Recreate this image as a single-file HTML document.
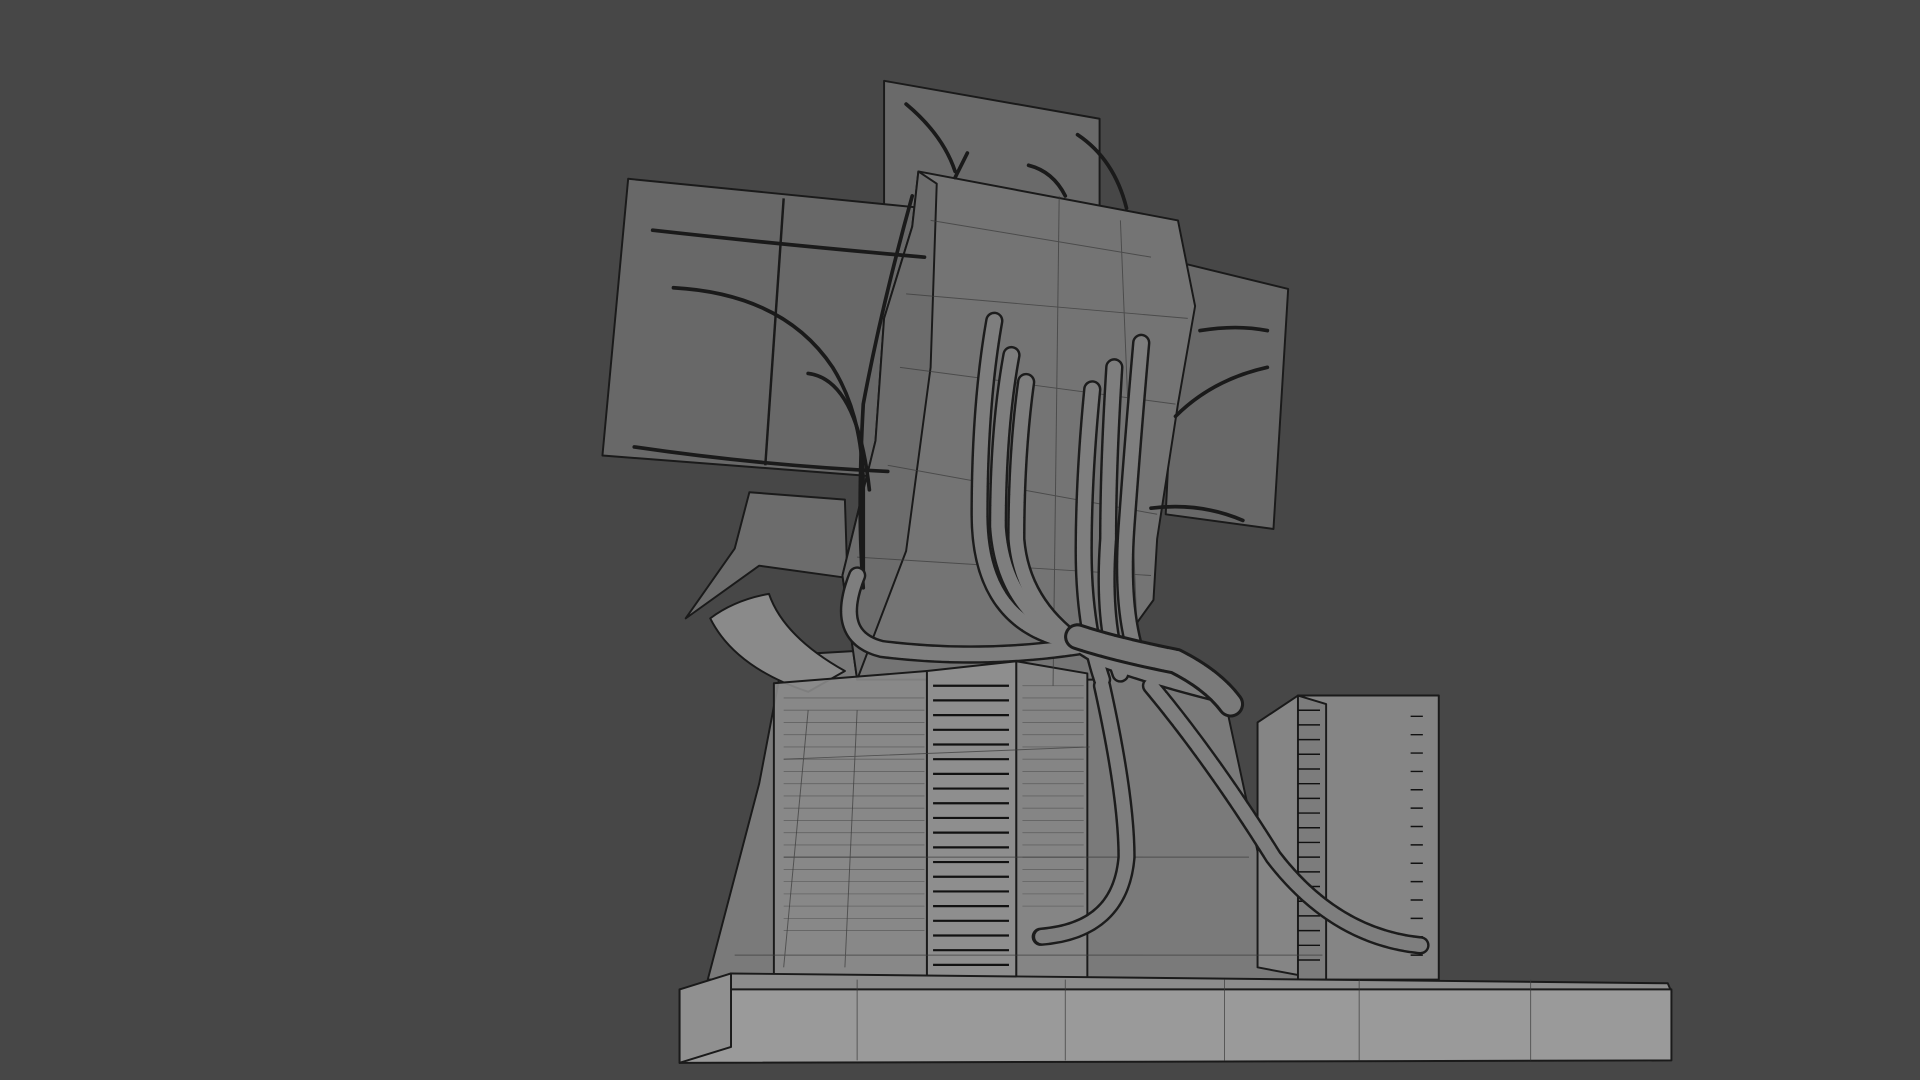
<!DOCTYPE html><html><head><style>html,body{margin:0;padding:0;background:#474747;overflow:hidden}svg{display:block}</style></head><body>
<svg width="1920" height="1080" viewBox="0 0 1568 882" preserveAspectRatio="none" xmlns="http://www.w3.org/2000/svg">
<rect width="1568" height="882" fill="#474747"/>
<g stroke="#1a1a1a" stroke-width="1.6" stroke-linejoin="round">
<polygon points="722,66 898,97 898,205 722,175" fill="#6a6a6a"/>
<polygon points="513,146 755,170 752,392 492,372" fill="#686868"/>
<line x1="640" y1="162" x2="625" y2="380" stroke-width="2"/>
<polygon points="962,214 1052,236 1040,432 952,420" fill="#686868"/>
<polygon points="612,402 690,408 692,472 620,462 560,505 600,448" fill="#6c6c6c"/>
<polygon points="640,535 900,520 1000,570 1028,700 1085,800 578,800 620,640" fill="#7a7a7a"/>
<polygon points="750,140 962,180 976,250 962,330 945,440 942,490 895,555 700,555 688,470 715,360 722,260 745,185" fill="#747474"/>
<polygon points="750,140 765,150 760,300 740,450 700,555 688,470 715,360 722,260 745,185" fill="#6c6c6c"/>
<path d="M580,505 Q600,490 628,485 Q640,520 690,548 L660,565 Q600,545 580,505Z" fill="#8a8a8a"/>
<polygon points="632,558 757,548 757,800 632,797" fill="#8a8a8a" fill-opacity="0.9"/>
<polygon points="757,548 830,540 830,800 757,800" fill="#8e8e8e"/>
<polygon points="830,540 888,550 888,800 830,800" fill="#858585"/>
<polygon points="1027,590 1060,568 1175,568 1175,800 1080,800 1027,790" fill="#858585"/>
<polygon points="1060,568 1083,575 1083,800 1060,800" fill="#7c7c7c"/>
<polygon points="597,795 1362,803 1365,810 555,810" fill="#8c8c8c"/>
<polygon points="555,808 1365,808 1365,866 555,868" fill="#9a9a9a"/>
<polygon points="555,808 597,795 597,855 555,868" fill="#909090"/>
</g>
<g stroke="#5a5a5a" stroke-width="0.7" opacity="0.8">
<path d="M640,570h115M640,580h115M640,590h115M640,600h115M640,610h115M640,620h115M640,630h115M640,640h115M640,650h115M640,660h115M640,670h115M640,680h115M640,690h115M640,700h115M640,710h115M640,720h115M640,730h115M640,740h115M640,750h115M640,760h115"/>
<path d="M835,560h50M835,570h50M835,580h50M835,590h50M835,600h50M835,610h50M835,620h50M835,630h50M835,640h50M835,650h50M835,660h50M835,670h50M835,680h50M835,690h50M835,700h50M835,710h50M835,720h50M835,730h50M835,740h50"/>
</g>
<g stroke="#111" stroke-width="1.8">
<path d="M762,560h62M762,572h62M762,584h62M762,596h62M762,608h62M762,620h62M762,632h62M762,644h62M762,656h62M762,668h62M762,680h62M762,692h62M762,704h62M762,716h62M762,728h62M762,740h62M762,752h62M762,764h62M762,776h62M762,788h62"/>
<path d="M1060,580h18M1060,592h18M1060,604h18M1060,616h18M1060,628h18M1060,640h18M1060,652h18M1060,664h18M1060,676h18M1060,688h18M1060,700h18M1060,712h18M1060,724h18M1060,736h18M1060,748h18M1060,760h18M1060,772h18M1060,784h18" stroke-width="1.2"/>
<path d="M1152,585h10M1152,600h10M1152,615h10M1152,630h10M1152,645h10M1152,660h10M1152,675h10M1152,690h10M1152,705h10M1152,720h10M1152,735h10M1152,750h10M1152,765h10M1152,780h10" stroke-width="1.2"/>
</g>
<g stroke="#3a3a3a" stroke-width="0.8" fill="none" opacity="0.7">
<path d="M760,180L940,210M740,240L970,260M735,300L960,330M725,380L945,420M700,455L940,470M640,620L890,610M640,700L1020,700M600,780L1080,780M700,800V866M870,800V866M1000,800V866M1110,800V866M1250,800V866"/>
<path d="M865,160L860,560M915,180L930,550M660,580L640,790M700,580L690,790"/>
</g>
<g fill="none" stroke="#1a1a1a" stroke-width="3" stroke-linecap="round">
<path d="M533,188 Q640,200 755,210"/>
<path d="M518,365 Q620,380 725,385"/>
<path d="M550,235 Q640,240 680,300 Q705,340 705,400 L705,470"/>
<path d="M660,305 Q700,310 710,400"/>
<path d="M745,160 Q720,250 705,330 Q700,420 705,480"/>
<path d="M980,270 Q1010,265 1035,270M1035,300 Q990,310 960,340M940,415 Q980,410 1015,425"/>
<path d="M740,85 Q770,110 780,140M880,110 Q910,130 920,170M790,125 L780,145M840,135 Q860,140 870,160"/>
</g>
<g fill="none" stroke-linecap="round">
<g stroke="#1c1c1c" stroke-width="15">
<path id="c1" d="M812,262 Q800,330 800,420 Q800,500 860,520 Q900,530 940,540"/>
<path d="M826,290 Q815,350 815,430 Q820,505 890,530 Q930,540 960,555"/>
<path d="M838,312 Q830,370 830,440 Q835,505 905,540 Q950,555 990,565"/>
<path d="M932,280 Q925,360 920,430 Q915,500 930,540"/>
<path d="M910,300 Q905,380 905,440 Q900,510 915,550"/>
<path d="M892,318 Q885,390 885,450 Q885,510 900,555"/>
<path d="M900,560 Q920,650 920,700 Q915,760 850,765"/>
<path d="M940,560 Q990,620 1040,700 Q1090,765 1160,772"/>
<path d="M700,470 Q680,520 720,530 Q800,540 880,528"/>
</g>
<g stroke="#7e7e7e" stroke-width="11" stroke-dasharray="5 1.2">
<path d="M812,262 Q800,330 800,420 Q800,500 860,520 Q900,530 940,540"/>
<path d="M826,290 Q815,350 815,430 Q820,505 890,530 Q930,540 960,555"/>
<path d="M838,312 Q830,370 830,440 Q835,505 905,540 Q950,555 990,565"/>
<path d="M932,280 Q925,360 920,430 Q915,500 930,540"/>
<path d="M910,300 Q905,380 905,440 Q900,510 915,550"/>
<path d="M892,318 Q885,390 885,450 Q885,510 900,555"/>
<path d="M900,560 Q920,650 920,700 Q915,760 850,765"/>
<path d="M940,560 Q990,620 1040,700 Q1090,765 1160,772"/>
<path d="M700,470 Q680,520 720,530 Q800,540 880,528"/>
</g>
<path d="M880,520 Q910,530 960,540 Q990,555 1005,575" stroke="#1c1c1c" stroke-width="22"/>
<path d="M880,520 Q910,530 960,540 Q990,555 1005,575" stroke="#7a7a7a" stroke-width="17" stroke-dasharray="6 1.5"/>
</g>
</svg>
</body></html>
